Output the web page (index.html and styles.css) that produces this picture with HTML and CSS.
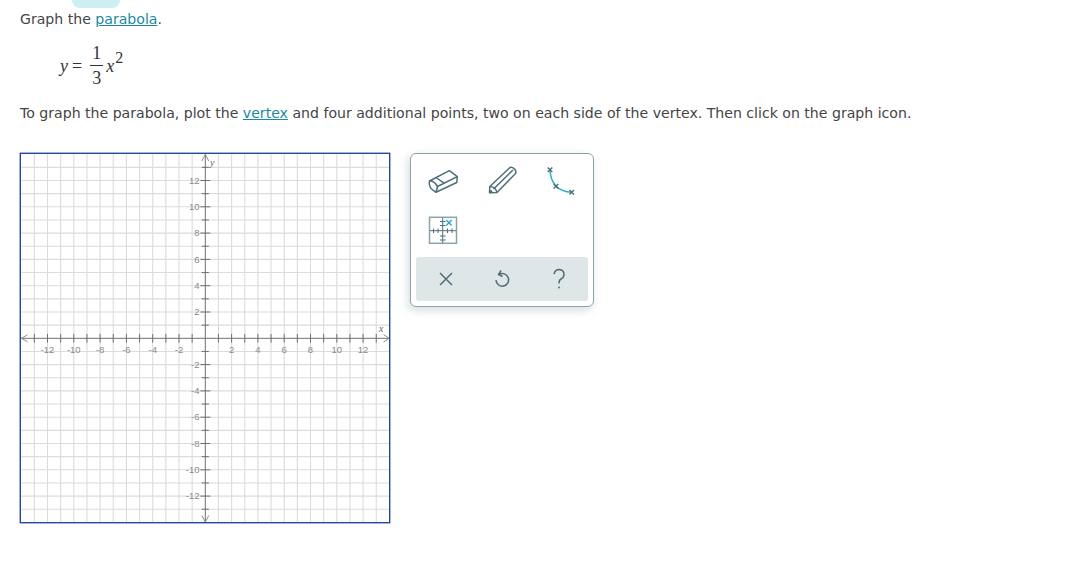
FILE: index.html
```html
<!DOCTYPE html>
<html lang="en">
<head>
  <meta charset="UTF-8">
  <meta name="viewport" content="width=device-width, initial-scale=1.0">
  <title>Graph the parabola</title>
  <link rel="stylesheet" href="styles.css">
</head>
<body>
  <div class="top-tab"></div>
  <p class="line first">Graph the <a href="#">parabola</a>.</p>

  <div class="equation">
    <i>y</i><span class="equals">=</span>
    <span class="fraction"><span class="num">1</span><span class="den">3</span></span>
    <i>x</i><sup>2</sup>
  </div>

  <p class="line">To graph the parabola, plot the <a href="#">vertex</a> and four additional points, two on each side of the vertex. Then click on the graph icon.</p>

  <div class="workspace">
    <div class="graph">
      <svg width="372" height="372" viewBox="19 152 372 372">
        <g transform="translate(205.3 338.3) scale(13.15)">
          <path class="grid-lines" vector-effect="non-scaling-stroke" d="M-13-14V14M-12-14V14M-11-14V14M-10-14V14M-9-14V14M-8-14V14M-7-14V14M-6-14V14M-5-14V14M-4-14V14M-3-14V14M-2-14V14M-1-14V14M1-14V14M2-14V14M3-14V14M4-14V14M5-14V14M6-14V14M7-14V14M8-14V14M9-14V14M10-14V14M11-14V14M12-14V14M13-14V14M-14-13H14M-14-12H14M-14-11H14M-14-10H14M-14-9H14M-14-8H14M-14-7H14M-14-6H14M-14-5H14M-14-4H14M-14-3H14M-14-2H14M-14-1H14M-14 1H14M-14 2H14M-14 3H14M-14 4H14M-14 5H14M-14 6H14M-14 7H14M-14 8H14M-14 9H14M-14 10H14M-14 11H14M-14 12H14M-14 13H14"/>
          <path class="axes" vector-effect="non-scaling-stroke" d="M-14 0H14M0-14V14"/>
          <path class="axes" vector-effect="non-scaling-stroke" d="M-13-.33V.33M-12-.33V.33M-11-.33V.33M-10-.33V.33M-9-.33V.33M-8-.33V.33M-7-.33V.33M-6-.33V.33M-5-.33V.33M-4-.33V.33M-3-.33V.33M-2-.33V.33M-1-.33V.33M1-.33V.33M2-.33V.33M3-.33V.33M4-.33V.33M5-.33V.33M6-.33V.33M7-.33V.33M8-.33V.33M9-.33V.33M10-.33V.33M11-.33V.33M12-.33V.33M13-.33V.33"/>
          <path class="axes" vector-effect="non-scaling-stroke" d="M-.27-13H.27M-.38-12H.38M-.27-11H.27M-.38-10H.38M-.27-9H.27M-.38-8H.38M-.27-7H.27M-.38-6H.38M-.27-5H.27M-.38-4H.38M-.27-3H.27M-.38-2H.38M-.27-1H.27M-.27 1H.27M-.38 2H.38M-.27 3H.27M-.38 4H.38M-.27 5H.27M-.38 6H.38M-.27 7H.27M-.38 8H.38M-.27 9H.27M-.38 10H.38M-.27 11H.27M-.38 12H.38M-.27 13H.27"/>
        </g>
        <path class="arrows" d="M27.5 334.8L21.5 338.3L27.5 341.8M383.5 334.5L389 338.3L383.5 342.1M201.8 161L205.3 154.5L208.8 161M201.8 515.5L205.3 522L208.8 515.5"/>

        <g class="labels x-labels">
          <text x="47.5" y="353">-12</text><text x="73.8" y="353">-10</text><text x="100.1" y="353">-8</text><text x="126.4" y="353">-6</text><text x="152.7" y="353">-4</text><text x="179" y="353">-2</text>
          <text x="231.6" y="353">2</text><text x="257.9" y="353">4</text><text x="284.2" y="353">6</text><text x="310.5" y="353">8</text><text x="336.8" y="353">10</text><text x="363.1" y="353">12</text>
        </g>
        <g class="labels y-labels">
          <text x="199.5" y="184">12</text><text x="199.5" y="210">10</text><text x="199.5" y="236">8</text><text x="199.5" y="263">6</text><text x="199.5" y="289">4</text><text x="199.5" y="315">2</text>
          <text x="199.5" y="368">-2</text><text x="199.5" y="394">-4</text><text x="199.5" y="420">-6</text><text x="199.5" y="447">-8</text><text x="199.5" y="473">-10</text><text x="199.5" y="499">-12</text>
        </g>
        <text class="axis-name" x="210" y="166">y</text>
        <text class="axis-name" x="379" y="332">x</text>
        <rect class="graph-border" x="20.3" y="153.3" width="369.4" height="369.4"/>
      </svg>
    </div>

    <div class="toolbar">
      <svg class="tools" width="172" height="98" viewBox="416 158 172 98">
        <!-- eraser -->
        <path class="ink" d="M429.5 181L449.3 170.7L457.3 176.7L437.5 186.5L436 192.3L431 188.5Q428.5 184 429.5 181Q434 180.5 437.5 186.5M457.3 176.7L456.8 182.5L436 192.3M436 177.5L444.5 183.3"/>
        <!-- pencil -->
        <path class="ink" d="M489.5 192.7L489.8 186.5L510 167.5Q512.5 166.5 515 169.5Q516.5 172 515.5 173.5L497 192.5ZM489.8 186.5Q495.5 186.5 497 192.5M493.5 189L513 170"/>
        <circle class="fill" cx="490.8" cy="191.6" r="1.6"/>
        <!-- curve -->
        <path class="accent" d="M550 169.7Q551 191 571.7 192.3"/>
        <path class="ink marks" d="M547.7 167.4L552.3 172M552.3 167.4L547.7 172M553.7 184L558.3 188.6M558.3 184L553.7 188.6M569.4 190L574 194.6M574 190L569.4 194.6"/>
        <!-- graph -->
        <rect class="frame" x="429.5" y="217.3" width="27" height="26"/>
        <path class="ink thin" d="M430 230.7H456M442.7 218V243M433.5 228.5V233M438 228.5V233M447.5 228.5V233M452 228.5V233M440 221.5H445.5M440 225.5H445.5M440 236H445.5M440 240H445.5"/>
        <path class="accent" d="M446.3 220L451.7 225.5M451.7 220L446.3 225.5"/>
      </svg>
      <div class="actions">
        <svg width="24" height="24" viewBox="0 0 24 24">
          <path class="ink" d="M6 6L18 18M18 6L6 18"/>
        </svg>
        <svg width="24" height="24" viewBox="0 0 24 24">
          <path class="ink" d="M9 7.5A6.3 6.3 0 1 1 6 13M11 3.5L8.5 7.5L12.5 9.5"/>
        </svg>
        <svg width="24" height="24" viewBox="0 0 24 24">
          <path class="ink" d="M7 7Q8 2.5 12.5 2.5Q17 3 17 7.5Q17 10.5 14 12Q12 13 12 16.5"/>
          <circle class="fill" cx="12" cy="20.5" r="1"/>
        </svg>
      </div>
    </div>
  </div>
</body>
</html>
```
FILE: styles.css
```css
body {
  margin: 0;
  padding: 0 20px;
  height: 562px;
  box-sizing: border-box;
  overflow: hidden;
  background-color: #fff;
  font-family: "DejaVu Sans", sans-serif;
  font-size: 14.1px;
  color: #444;
}

.top-tab {
  position: absolute;
  top: 0;
  left: 72px;
  width: 48px;
  height: 8px;
  background-color: #cdeff4;
  border-radius: 0 0 8px 8px;
}

.line {
  margin: 0;
  line-height: 18px;
  white-space: nowrap;
}

.line.first {
  padding-top: 10px;
}

a {
  color: #1a8a9e;
}

.equation {
  display: flex;
  align-items: center;
  height: 48px;
  margin: 14px 0 14px 40px;
  font-family: "Liberation Serif", serif;
  font-size: 18px;
  color: #333;
}

.equals {
  margin: 0 8px 0 4px;
}

.fraction {
  display: flex;
  flex-direction: column;
  align-items: center;
  width: 13px;
  margin-right: 3px;
}

.num {
  width: 100%;
  padding-bottom: 4px;
  line-height: 16px;
  text-align: center;
  border-bottom: 1px solid #333;
}

.den {
  padding-top: 3px;
  line-height: 18px;
}

.equation sup {
  margin: -16px 0 0 1px;
  font-size: 16px;
  line-height: 1;
}

.workspace {
  display: flex;
  align-items: flex-start;
  gap: 19px;
  margin: 30px 0 0 -1px;
}

.graph svg {
  display: block;
}

.grid-lines {
  fill: none;
  stroke: #dcdcdc;
  stroke-width: 1.1;
}

.axes {
  fill: none;
  stroke: #707070;
  stroke-width: 1;
}

.arrows {
  fill: none;
  stroke: #8c8c8c;
  stroke-width: 1;
}

.graph-border {
  fill: none;
  stroke: #23479a;
  stroke-width: 1.4;
}

.labels text {
  font-family: "Liberation Sans", sans-serif;
  font-size: 9.5px;
  fill: #8a8a8a;
}

.x-labels text {
  text-anchor: middle;
}

.y-labels text {
  text-anchor: end;
}

.axis-name {
  font-family: "Liberation Serif", serif;
  font-style: italic;
  font-size: 10px;
  fill: #666;
}

.toolbar {
  width: 184px;
  height: 154px;
  margin-top: 1px;
  box-sizing: border-box;
  padding: 4px 5px 5px;
  display: flex;
  flex-direction: column;
  justify-content: space-between;
  border: 1px solid #8fa3a8;
  border-radius: 6px;
  background-color: #fff;
  box-shadow: -2px 3px 8px rgba(90, 120, 130, 0.25);
}

.tools {
  display: block;
}

.actions {
  display: flex;
  justify-content: center;
  align-items: center;
  gap: 32.5px;
  height: 44px;
  background-color: #dfe6e8;
  border-radius: 3px;
}

.ink {
  fill: none;
  stroke: #4f6f78;
  stroke-width: 1.5;
  stroke-linejoin: round;
}

.ink.thin {
  stroke-width: 1;
}

.ink.marks {
  stroke-width: 1.4;
}

.fill {
  fill: #4f6f78;
}

.accent {
  fill: none;
  stroke: #26afc8;
  stroke-width: 1.5;
}

.frame {
  fill: none;
  stroke: #8ba3aa;
  stroke-width: 1.5;
}
```
